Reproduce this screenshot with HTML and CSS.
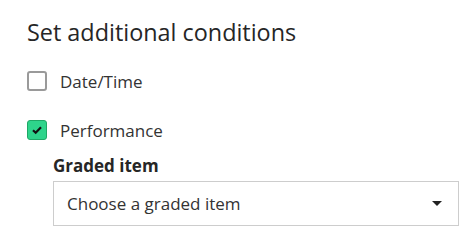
FILE: index.html
```html
<!DOCTYPE html>
<html lang="en">

<head>
    <meta charset="UTF-8">
    <meta name="viewport" content="width=device-width, initial-scale=1.0">
    <title>Set additional conditions</title>
    <link rel="stylesheet" href="styles.css">
</head>

<body>
    <div class="panel">
        <h2 class="title">Set additional conditions</h2>
        <label class="option">
            <span class="box"></span>
            <span>Date/Time</span>
        </label>
        <label class="option">
            <span class="box checked">
                <svg width="12" height="10" viewBox="0 0 12 10">
                    <path d="M2 5.2 L4.7 7.8 L10 2.2" fill="none" stroke="#111" stroke-width="2.2" />
                </svg>
            </span>
            <span>Performance</span>
        </label>
        <div class="field">
            <div class="field-label">Graded item</div>
            <div class="select">
                <span>Choose a graded item</span>
                <span class="caret"></span>
            </div>
        </div>
    </div>
</body>

</html>
```

FILE: styles.css
```css
body {
    margin: 0;
    font-family: 'Open Sans', sans-serif;
    color: #262626;
    background-color: #fff;
}

.panel {
    width: 474px;
    height: 239px;
    padding: 17px 15px 0 27px;
    box-sizing: border-box;
}

.title {
    font-size: 23.4px;
    font-weight: 400;
    margin: 0 0 24px 0;
    line-height: 30px;
}

.option {
    display: flex;
    align-items: center;
    gap: 13px;
    font-size: 17px;
    color: #333;
    height: 20px;
    margin-bottom: 29px;
}

.box {
    width: 20px;
    height: 20px;
    box-sizing: border-box;
    border: 2px solid #9a9a9a;
    border-radius: 3px;
    display: flex;
    align-items: center;
    justify-content: center;
}

.box.checked {
    background-color: #2ed48b;
    border-color: #1fa866;
    border-width: 1px;
}

.option + .option {
    margin-bottom: 0;
}

.field {
    margin-left: 26px;
    margin-top: 14px;
}

.field-label {
    font-size: 17px;
    font-weight: 700;
    line-height: 24px;
    margin-bottom: 3px;
}

.select {
    width: 406px;
    height: 45px;
    box-sizing: border-box;
    border: 1px solid #cdcdcd;
    display: flex;
    align-items: center;
    justify-content: space-between;
    padding: 0 16px 0 13px;
    font-size: 17px;
    color: #333;
}

.caret {
    width: 0;
    height: 0;
    border-left: 5px solid transparent;
    border-right: 5px solid transparent;
    border-top: 5px solid #222;
}
```
